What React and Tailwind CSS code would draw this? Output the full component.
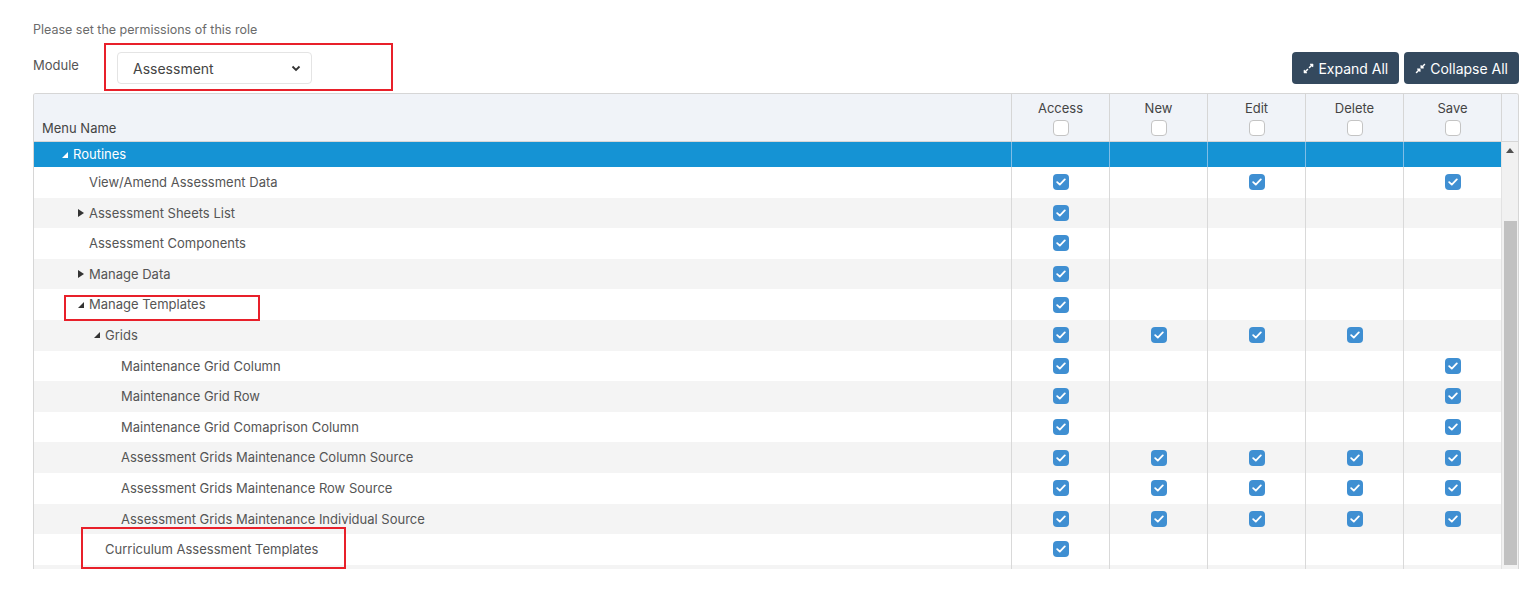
import { FaExpandAlt, FaCompressAlt } from "react-icons/fa";

const rows = [
  { name: "View/Amend Assessment Data", level: 1, perms: [1, 0, 1, 0, 1] },
  { name: "Assessment Sheets List", level: 1, arrow: "closed", perms: [1, 0, 0, 0, 0] },
  { name: "Assessment Components", level: 1, perms: [1, 0, 0, 0, 0] },
  { name: "Manage Data", level: 1, arrow: "closed", perms: [1, 0, 0, 0, 0] },
  { name: "Manage Templates", level: 1, arrow: "open", perms: [1, 0, 0, 0, 0] },
  { name: "Grids", level: 2, arrow: "open", perms: [1, 1, 1, 1, 0] },
  { name: "Maintenance Grid Column", level: 3, perms: [1, 0, 0, 0, 1] },
  { name: "Maintenance Grid Row", level: 3, perms: [1, 0, 0, 0, 1] },
  { name: "Maintenance Grid Comaprison Column", level: 3, perms: [1, 0, 0, 0, 1] },
  { name: "Assessment Grids Maintenance Column Source", level: 3, perms: [1, 1, 1, 1, 1] },
  { name: "Assessment Grids Maintenance Row Source", level: 3, perms: [1, 1, 1, 1, 1] },
  { name: "Assessment Grids Maintenance Individual Source", level: 3, perms: [1, 1, 1, 1, 1] },
  { name: "Curriculum Assessment Templates", level: 2, perms: [1, 0, 0, 0, 0] },
  { name: "", level: 2, perms: [0, 0, 0, 0, 0] },
];

const indent = ["pl-[29px]", "pl-[44px]", "pl-[60px]", "pl-[76px]"];
const columns = ["Access", "New", "Edit", "Delete", "Save"];

function Arrow({ type, white }) {
  const fill = white ? "#ffffff" : "#333333";
  if (type === "open") {
    return (
      <svg width="6" height="6" viewBox="0 0 6 6">
        <polygon points="6,0 6,6 0,6" fill={fill} />
      </svg>
    );
  }
  return (
    <svg width="6" height="8" viewBox="0 0 6 8">
      <polygon points="0,0 6,4 0,8" fill={fill} />
    </svg>
  );
}

function Checkbox({ checked }) {
  if (!checked) {
    return <span className="w-[16px] h-[16px] rounded-[4px] border border-[#c4c4c4] bg-white block" />;
  }
  return (
    <span className="w-[16px] h-[16px] rounded-[4px] bg-[#3f8fd2] flex items-center justify-center">
      <svg width="10" height="8" viewBox="0 0 10 8">
        <path d="M1.2 4.2 L3.8 6.6 L8.8 1.4" stroke="#ffffff" strokeWidth="1.8" fill="none" strokeLinecap="round" strokeLinejoin="round" />
      </svg>
    </span>
  );
}

export default function App() {
  return (
    <div className="relative w-[1536px] h-[612px] bg-white text-[#555] font-['Inter','Liberation_Sans',sans-serif] overflow-hidden">
      <div className="pl-[33px] pr-[17px] pt-[21px]">
        <p className="text-[12.5px] text-[#6b6b6b] leading-[18px]">Please set the permissions of this role</p>

        <div className="flex items-center justify-between mt-[13px] h-[32px]">
          <div className="flex items-center">
            <span className="text-[13px] text-[#555] w-[84px] -mt-[4px]">Module</span>
            <div className="w-[195px] h-[32px] border border-[#e4e4e4] rounded-[4px] flex items-center justify-between pl-[15px] pr-[10px] text-[14px] text-[#444]">
              Assessment
              <svg width="10" height="7" viewBox="0 0 10 7">
                <path d="M1.5 1.5 L5 5 L8.5 1.5" stroke="#333" strokeWidth="1.8" fill="none" />
              </svg>
            </div>
          </div>
          <div className="flex gap-[5px]">
            <button className="h-[32px] px-[11px] rounded-[4px] bg-[#34495e] text-white text-[14px] flex items-center gap-[4px]">
              <FaExpandAlt size={11} />
              Expand All
            </button>
            <button className="h-[32px] px-[11px] rounded-[4px] bg-[#34495e] text-white text-[14px] flex items-center gap-[4px]">
              <FaCompressAlt size={11} />
              Collapse All
            </button>
          </div>
        </div>

        <div className="mt-[9px] border-x border-t border-[#d6d6d6] rounded-t-[3px] h-[476px] overflow-hidden">
          {/* Header */}
          <div className="grid grid-cols-[977px_repeat(5,98px)_1fr] h-[48px] bg-[#f0f3f8] border-b border-[#d6d6d6] text-[13px] text-[#444]">
            <div className="flex items-end pl-[8px] pb-[3px]">Menu Name</div>
            {columns.map((c) => (
              <div key={c} className="border-l border-[#d6d6d6] flex flex-col items-center pt-[6px] gap-[4px]">
                <span className="leading-[16px]">{c}</span>
                <Checkbox checked={false} />
              </div>
            ))}
            <div className="border-l border-[#d6d6d6]" />
          </div>

          {/* Body */}
          <div className="flex h-[428px]">
            <div className="flex-1 overflow-hidden">
              <div className="grid grid-cols-[977px_repeat(5,98px)] h-[25px] bg-[#1593d4] text-white text-[13px]">
                <div className="flex items-center pl-[28px] gap-[5px]">
                  <Arrow type="open" white />
                  <span>Routines</span>
                </div>
                {columns.map((c) => (
                  <div key={c} className="border-l border-[#7fbde6]" />
                ))}
              </div>
              {rows.map((r, i) => (
                <div
                  key={i}
                  className={`grid grid-cols-[977px_repeat(5,98px)] h-[30.6px] text-[13px] ${i % 2 === 1 ? "bg-[#f4f4f4]" : "bg-white"}`}
                >
                  <div className={`flex items-center ${indent[r.level]}`}>
                    <span className="w-[11px] flex items-center">{r.arrow && <Arrow type={r.arrow} />}</span>
                    <span className="text-[#555] pt-[1px]">{r.name}</span>
                  </div>
                  {r.perms.map((p, j) => (
                    <div key={j} className="border-l border-[#d9d9d9] flex items-center justify-center">
                      {p ? <Checkbox checked /> : null}
                    </div>
                  ))}
                </div>
              ))}
            </div>
            {/* Scrollbar */}
            <div className="w-[17px] bg-[#f1f1f1] border-l border-[#e2e2e2] flex flex-col items-center">
              <svg className="mt-[6px]" width="8" height="5" viewBox="0 0 8 5">
                <polygon points="4,0 8,5 0,5" fill="#505050" />
              </svg>
              <div className="mt-[68px] w-[13px] h-[344px] bg-[#c1c1c1]" />
            </div>
          </div>
        </div>
      </div>

      {/* Annotation boxes */}
      <div className="absolute left-[104px] top-[43px] w-[289px] h-[48px] border-2 border-[#e8202a]" />
      <div className="absolute left-[64px] top-[295px] w-[196px] h-[26px] border-2 border-[#e8202a]" />
      <div className="absolute left-[81px] top-[527px] w-[265px] h-[42px] border-2 border-[#e8202a]" />
    </div>
  );
}
